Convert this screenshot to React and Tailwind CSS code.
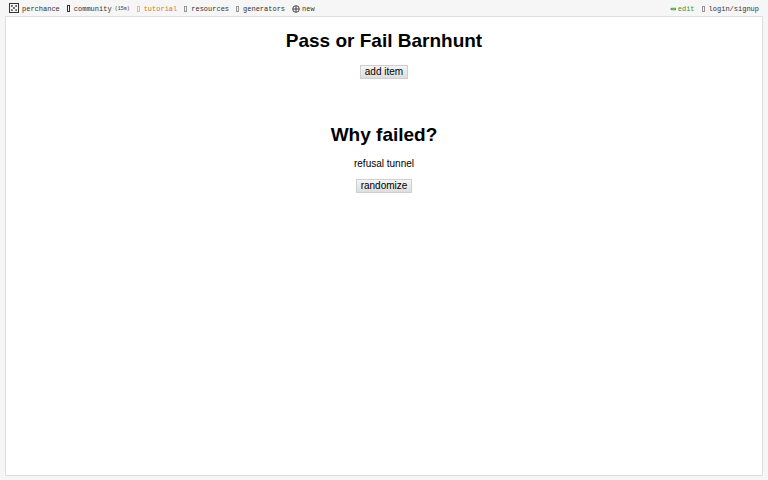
function MissingGlyph({ strong = false }) {
  return (
    <span
      aria-hidden="true"
      className={strong ? 'w-[3px] h-[7px] mb-0.5 mr-1 border border-current' : 'w-[3px] h-1.5 mr-1 border border-current opacity-50'}
    />
  );
}

function DiceIcon() {
  return (
    <svg viewBox="0 0 10 10" className="w-2.5 h-2.5 mb-0.5 mr-[3px]" fill="currentColor" aria-hidden="true">
      <rect x="0.5" y="0.5" width="9" height="9" fill="none" stroke="currentColor" />
      <circle cx="2.9" cy="2.9" r="0.9" />
      <circle cx="7.1" cy="2.9" r="0.9" />
      <circle cx="5" cy="5" r="0.9" />
      <circle cx="2.9" cy="7.1" r="0.9" />
      <circle cx="7.1" cy="7.1" r="0.9" />
    </svg>
  );
}

function PlusIcon() {
  return (
    <svg viewBox="0 0 8 8" className="w-2 h-2 mr-0.5" fill="none" stroke="currentColor" strokeWidth="0.9" aria-hidden="true">
      <circle cx="4" cy="4" r="3.3" />
      <path d="M4 1v6M1 4h6" />
    </svg>
  );
}

function PencilIcon() {
  return (
    <svg viewBox="0 0 6 4" className="w-1.5 h-1 mr-0.5" aria-hidden="true">
      <path d="M0 2 1.6 0.8H6V3.2H1.6Z" fill="currentColor" opacity="0.85" />
      <path d="M2 2h3" stroke="#f5f5f5" strokeWidth="0.4" />
    </svg>
  );
}

function NavLink({ icon, className = '', children }) {
  return (
    <a href="#" className={`flex items-center whitespace-nowrap ${className}`}>
      {icon}
      {children}
    </a>
  );
}

function PlainButton({ children }) {
  return (
    <button
      type="button"
      className="px-1 border border-[#cfcfcf] bg-linear-to-b from-[#f4f4f4] to-[#dedede] leading-3"
    >
      {children}
    </button>
  );
}

export default function App() {
  return (
    <div className="min-h-screen flex flex-col bg-[#f6f6f6] px-[5px] pb-1 text-[10px] text-black font-['Liberation_Sans',Arial,sans-serif]">
      <nav className="h-4 flex items-center justify-between pt-0.5 px-1 text-[7px] leading-4 text-[#333] font-['Liberation_Mono',monospace]">
        <div className="flex items-center gap-[7px]">
          <NavLink icon={<DiceIcon />}>perchance</NavLink>
          <NavLink icon={<MissingGlyph strong />}>
            community<span className="ml-[3px] text-[5px]">(15m)</span>
          </NavLink>
          <NavLink icon={<MissingGlyph />} className="text-[#e4772a]">tutorial</NavLink>
          <NavLink icon={<MissingGlyph />}>resources</NavLink>
          <NavLink icon={<MissingGlyph />}>generators</NavLink>
          <NavLink icon={<PlusIcon />}>new</NavLink>
        </div>
        <div className="flex items-center gap-[7px]">
          <NavLink icon={<PencilIcon />} className="text-[#2d962d]">edit</NavLink>
          <NavLink icon={<MissingGlyph />}>login/signup</NavLink>
        </div>
      </nav>

      <main className="grow flex flex-col items-center bg-white border border-[#dedede] pt-3">
        <h1 className="text-[19px] leading-6 font-bold">Pass or Fail Barnhunt</h1>
        <div className="flex mt-3">
          <PlainButton>add item</PlainButton>
        </div>
        <h1 className="mt-11 text-[19px] leading-6 font-bold">Why failed?</h1>
        <p className="mt-[11px] leading-3">refusal tunnel</p>
        <div className="flex mt-[9px]">
          <PlainButton>randomize</PlainButton>
        </div>
      </main>
    </div>
  );
}
